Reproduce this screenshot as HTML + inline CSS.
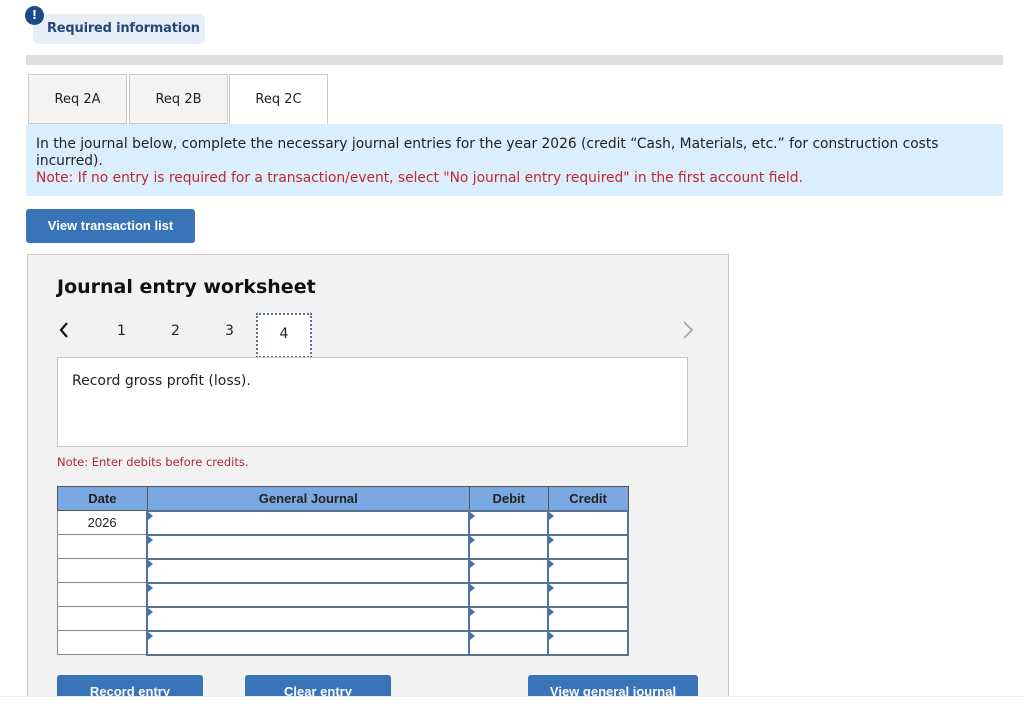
<!DOCTYPE html>
<html><head><meta charset="utf-8"><style>
*{box-sizing:border-box;margin:0;padding:0}
body{width:1024px;height:711px;background:#fff;font-family:"DejaVu Sans",Verdana,sans-serif;position:relative;overflow:hidden;color:#222}
.a{position:absolute}
.tab{position:absolute;top:74px;height:50px;background:#f3f3f3;border:1px solid #ccc;font-size:13px;text-align:center;line-height:50px}
.btn{position:absolute;background:#3a74b8;color:#fff;font-family:"Liberation Sans",Arial,sans-serif;font-weight:bold;font-size:13px;text-align:center;border-radius:3px}
table{border-collapse:collapse;font-family:"Liberation Sans",Arial,sans-serif;font-size:13px}
td,th{padding:0;height:24px}
th{background:#79a9e0;border:1px solid #555;font-weight:bold}
td.d{background:#fff;border:1px solid #888;text-align:center}
td.i{background:#fff;border:2px solid #5a7190;position:relative}
td.i:before{content:"";position:absolute;left:0;top:0;border-left:5px solid #3a74b8;border-top:4px solid transparent;border-bottom:4px solid transparent}
</style></head><body>
<div class="a" style="left:33px;top:14px;width:172px;height:30px;background:#e6eef8;border-radius:6px"></div>
<div class="a" style="left:25px;top:6px;width:19px;height:19px;border-radius:50%;background:#1d4b8a;color:#fff;font-size:12px;font-weight:bold;text-align:center;line-height:19px">!</div>
<div class="a" style="left:47px;top:21px;font-size:13px;font-weight:bold;color:#27477a;letter-spacing:-0.2px">Required information</div>
<div class="a" style="left:26px;top:55px;width:977px;height:10px;background:#ddd"></div>
<div class="tab" style="left:28px;width:99px">Req 2A</div>
<div class="tab" style="left:129px;width:99px">Req 2B</div>
<div class="tab" style="left:229px;width:99px;background:#fff;border-bottom:none;height:51px">Req 2C</div>
<div class="a" style="left:26px;top:124px;width:977px;height:72px;background:#dbeefd"></div>
<div class="a" style="left:36px;top:136px;width:950px;font-size:13.8px;line-height:17px">In the journal below, complete the necessary journal entries for the year 2026 (credit “Cash, Materials, etc.” for construction costs incurred).<br><span style="color:#c0262d">Note: If no entry is required for a transaction/event, select "No journal entry required" in the first account field.</span></div>
<div class="btn" style="left:26px;top:209px;width:169px;height:34px;line-height:34px">View transaction list</div>
<div class="a" style="left:27px;top:254px;width:702px;height:450px;background:#f2f2f2;border:1px solid #ccc"></div>
<div class="a" style="left:57px;top:276px;font-size:19px;font-weight:bold;color:#111">Journal entry worksheet</div>
<svg class="a" style="left:58px;top:321px" width="12" height="18"><path d="M9 2 L3 9 L9 16" stroke="#111" stroke-width="2.2" fill="none"/></svg>
<div class="a" style="left:117px;top:323px;font-size:14px">1</div>
<div class="a" style="left:171px;top:323px;font-size:14px">2</div>
<div class="a" style="left:225px;top:323px;font-size:14px">3</div>
<div class="a" style="left:256px;top:313px;width:56px;height:45px;background:#fff;border:2px dotted #5a7190;text-align:center;line-height:38px;font-size:14px">4</div>
<svg class="a" style="left:681px;top:320px" width="14" height="20"><path d="M3 2 L11 10 L3 18" stroke="#999" stroke-width="1.5" fill="none"/></svg>
<div class="a" style="left:57px;top:357px;width:631px;height:90px;background:#fff;border:1px solid #c8c8c8"></div>
<div class="a" style="left:72px;top:373px;font-size:14px">Record gross profit (loss).</div>
<div class="a" style="left:57px;top:455px;font-size:11.5px;color:#b3262d">Note: Enter debits before credits.</div>
<table class="a" style="left:57px;top:486px;width:572px">
<tr><th style="width:90px">Date</th><th style="width:323px">General Journal</th><th style="width:79px">Debit</th><th style="width:80px">Credit</th></tr>
<tr><td class="d">2026</td><td class="i"></td><td class="i"></td><td class="i"></td></tr>
<tr><td class="d"></td><td class="i"></td><td class="i"></td><td class="i"></td></tr>
<tr><td class="d"></td><td class="i"></td><td class="i"></td><td class="i"></td></tr>
<tr><td class="d"></td><td class="i"></td><td class="i"></td><td class="i"></td></tr>
<tr><td class="d"></td><td class="i"></td><td class="i"></td><td class="i"></td></tr>
<tr><td class="d"></td><td class="i"></td><td class="i"></td><td class="i"></td></tr>
</table>
<div class="btn" style="left:57px;top:675px;width:146px;height:34px;padding-top:9px">Record entry</div>
<div class="btn" style="left:245px;top:675px;width:146px;height:34px;padding-top:9px">Clear entry</div>
<div class="btn" style="left:528px;top:675px;width:170px;height:34px;padding-top:9px">View general journal</div>
<div class="a" style="left:0;top:696px;width:1024px;height:15px;background:#fff;border-top:1px solid #eee"></div>
</body></html>
